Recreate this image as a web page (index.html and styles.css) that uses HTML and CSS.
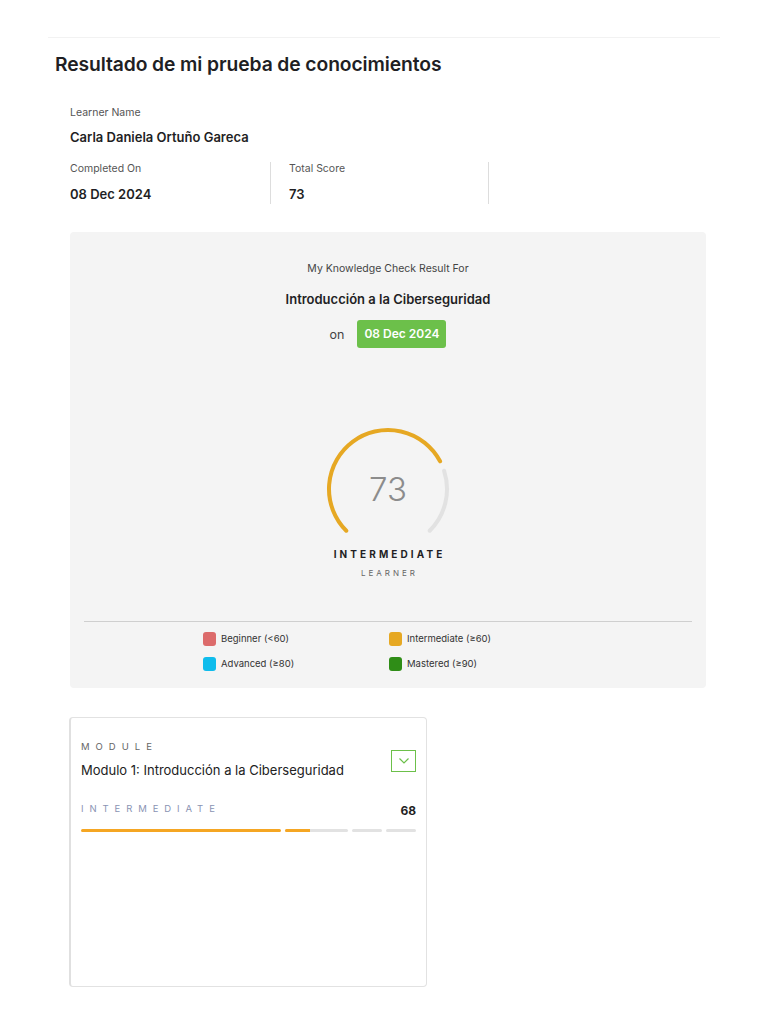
FILE: index.html
```html
<!DOCTYPE html>
<html lang="es">
<head>
    <meta charset="UTF-8">
    <meta name="viewport" content="width=device-width, initial-scale=1.0">
    <title>Resultado de mi prueba de conocimientos</title>
    <link rel="stylesheet" href="styles.css">
</head>
<body>
    <div class="page">
        <div class="topline"></div>
        <h2 class="title">Resultado de mi prueba de conocimientos</h2>

        <div class="info">
            <div class="label">Learner Name</div>
            <div class="value first">Carla Daniela Ortuño Gareca</div>
            <div class="info-row">
                <div class="info-col">
                    <div class="label">Completed On</div>
                    <div class="value">08 Dec 2024</div>
                </div>
                <div class="info-col">
                    <div class="label">Total Score</div>
                    <div class="value">73</div>
                </div>
            </div>
        </div>

        <div class="result">
            <div class="result-for">My Knowledge Check Result For</div>
            <div class="course">Introducción a la Ciberseguridad</div>
            <div class="date-line">
                <span class="on">on</span>
                <span class="badge">08 Dec 2024</span>
            </div>

            <div class="gauge">
                <svg width="130" height="130" viewBox="0 0 130 130">
                    <path d="M23.28 106.72 A59 59 0 1 1 117.09 37.30" fill="none" stroke="#e6a823" stroke-width="4" stroke-linecap="round"/>
                    <path d="M121.11 46.77 A59 59 0 0 1 106.72 106.72" fill="none" stroke="#e2e2e2" stroke-width="4" stroke-linecap="round"/>
                    <text x="65" y="77" text-anchor="middle" class="gauge-num">73</text>
                </svg>
            </div>
            <div class="level">INTERMEDIATE</div>
            <div class="learner">LEARNER</div>

            <div class="legend">
                <div class="legend-item"><span class="sw beginner"></span>Beginner (&lt;60)</div>
                <div class="legend-item"><span class="sw intermediate"></span>Intermediate (≥60)</div>
                <div class="legend-item"><span class="sw advanced"></span>Advanced (≥80)</div>
                <div class="legend-item"><span class="sw mastered"></span>Mastered (≥90)</div>
            </div>
        </div>

        <div class="module-card">
            <div class="module-head">
                <div>
                    <div class="module-label">MODULE</div>
                    <div class="module-name">Modulo 1: Introducción a la Ciberseguridad</div>
                </div>
                <div class="toggle">
                    <svg width="12" height="8" viewBox="0 0 12 8"><path d="M1.5 1.5 L6 6 L10.5 1.5" fill="none" stroke="#6cc04a" stroke-width="1.2"/></svg>
                </div>
            </div>
            <div class="module-score">
                <span class="module-level">INTERMEDIATE</span>
                <span class="module-num">68</span>
            </div>
            <div class="bar">
                <div class="seg s60"><div class="fill" style="width: 100%"></div></div>
                <div class="seg s20"><div class="fill" style="width: 40%"></div></div>
                <div class="seg s10"></div>
                <div class="seg s10"></div>
            </div>
        </div>
    </div>
</body>
</html>
```

FILE: styles.css
```css
body { margin: 0; font-family: Inter, "Liberation Sans", Arial, sans-serif; color: #1f1f24; background: #fff; }
.page { padding: 37px 48px 0 48px; }
.topline { border-top: 1px solid #f2f2f2; }
.title { margin: 14px 0 0 7px; font-size: 19.3px; font-weight: 600; line-height: 24px; letter-spacing: -0.1px; }

.info { margin: 30px 0 0 22px; }
.label { font-size: 10.5px; color: #555; line-height: 14px; }
.value { font-size: 13px; font-weight: 600; line-height: 18px; margin-top: 9px; }
.value.first { margin-top: 8px; }
.info-row { display: flex; margin-top: 16px; }
.info-col { width: 200px; border-right: 1px solid #ddd; padding: 0 0 1px 0; }
.info-col + .info-col { width: 199px; padding-left: 18px; }

.result { margin: 28px 14px 0 22px; background: #f4f4f4; border-radius: 4px; padding: 30px 14px 17px 14px; text-align: center; }
.result-for { font-size: 10.5px; color: #444; line-height: 14px; }
.course { font-size: 13px; font-weight: 600; line-height: 18px; margin-top: 14px; }
.date-line { display: flex; justify-content: center; align-items: center; gap: 13px; margin-top: 12px; }
.on { font-size: 12.5px; color: #444; }
.badge { background: #6cc04a; color: #fff; font-size: 12px; font-weight: 600; padding: 6px 7px; border-radius: 3px; line-height: 16px; }
.gauge { display: flex; justify-content: center; margin-top: 76px; }
.gauge-num { font-size: 33px; font-weight: 300; fill: #8c8c8c; }
.level { font-size: 10px; font-weight: 700; letter-spacing: 3.1px; margin-top: -7px; line-height: 14px; padding-left: 3px; }
.learner { font-size: 8px; letter-spacing: 3px; color: #666; margin-top: 6px; line-height: 12px; padding-left: 3px; }

.legend { border-top: 1px solid #cfcfcf; margin-top: 42px; padding: 9px 0 0 119px; display: grid; grid-template-columns: 186px 200px; row-gap: 10px; text-align: left; }
.legend-item { display: flex; align-items: center; gap: 5px; font-size: 9.5px; color: #333; line-height: 15px; }
.sw { width: 13px; height: 14px; border-radius: 3px; display: inline-block; }
.beginner { background: #dc6b6b; }
.intermediate { background: #e6a823; }
.advanced { background: #0fbcec; }
.mastered { background: #2f8d17; }

.module-card { box-sizing: border-box; margin: 29px 0 0 21px; width: 358px; height: 270px; border: 1px solid #e2e2e2; border-left: 2px solid #e0e0e0; border-radius: 4px; padding: 23px 10px 0 10px; }
.module-head { display: flex; justify-content: space-between; align-items: flex-start; }
.module-label { font-size: 9.5px; letter-spacing: 6px; color: #666; line-height: 12px; }
.module-name { font-size: 13px; line-height: 18px; margin-top: 8px; color: #222; }
.toggle { width: 23px; height: 20px; border: 1px solid #6cc04a; display: flex; align-items: center; justify-content: center; margin-top: 9px; }
.module-score { display: flex; justify-content: space-between; align-items: center; margin-top: 20px; }
.module-level { font-size: 9.5px; letter-spacing: 5.9px; color: #8a93b3; line-height: 12px; }
.module-num { font-size: 12px; font-weight: 700; margin-top: 4px; }
.bar { display: flex; gap: 4px; margin-top: 11px; }
.seg { height: 3px; background: #e2e2e2; border-radius: 2px; overflow: hidden; }
.fill { height: 100%; background: #f5a623; }
.s60 { width: 200px; }
.s20 { width: 63px; }
.s10 { width: 30px; }
```
